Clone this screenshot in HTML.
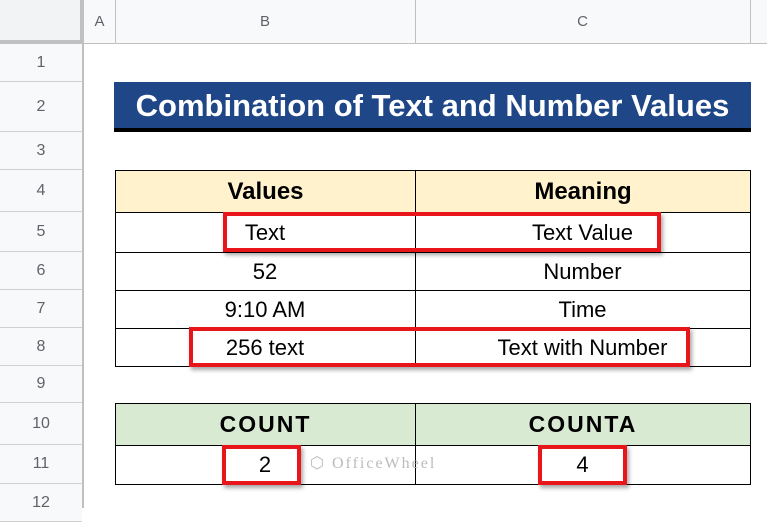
<!DOCTYPE html>
<html><head><style>
body{margin:0;width:767px;height:508px;overflow:hidden;background:#fff;font-family:"Liberation Sans",Arial,sans-serif;position:relative}
.a{position:absolute;box-sizing:border-box}
.hd{color:#5f6368;font-size:15px;text-align:center}
.rn{left:0;width:82px;border-bottom:1px solid #d0d0d0;background:#f8f9fa;color:#5f6368;font-size:16px;display:flex;align-items:center;justify-content:center}
.c{display:flex;align-items:center;justify-content:center;font-size:22px;color:#000}
.red{border:4px solid #e8151b;box-shadow:2px 3px 4px rgba(0,0,0,.35)}
</style></head><body>
<div class="a" style="left:0;top:0;width:767px;height:44px;background:#f8f9fa;border-bottom:1px solid #c0c0c0"></div>
<div class="a" style="left:0;top:0;width:84px;height:44px;background:#f1f3f4;border-right:4px solid #c0c0c0;border-bottom:4px solid #c0c0c0"></div>
<div class="a hd" style="left:84px;top:13px;width:31px">A</div>
<div class="a hd" style="left:115px;top:13px;width:300px">B</div>
<div class="a hd" style="left:415px;top:13px;width:335px">C</div>
<div class="a" style="left:115px;top:0;width:1px;height:44px;background:#c0c0c0"></div>
<div class="a" style="left:415px;top:0;width:1px;height:44px;background:#c0c0c0"></div>
<div class="a" style="left:750px;top:0;width:1px;height:44px;background:#c0c0c0"></div>
<div class="a" style="left:82px;top:44px;width:2px;height:464px;background:#c0c0c0"></div>
<div class="a rn" style="top:44px;height:38px">1</div>
<div class="a rn" style="top:82px;height:50px">2</div>
<div class="a rn" style="top:132px;height:38px">3</div>
<div class="a rn" style="top:170px;height:42px">4</div>
<div class="a rn" style="top:212px;height:40px">5</div>
<div class="a rn" style="top:252px;height:38px">6</div>
<div class="a rn" style="top:290px;height:38px">7</div>
<div class="a rn" style="top:328px;height:38px">8</div>
<div class="a rn" style="top:366px;height:37px">9</div>
<div class="a rn" style="top:403px;height:42px">10</div>
<div class="a rn" style="top:445px;height:39px">11</div>
<div class="a rn" style="top:484px;height:38px">12</div>

<div class="a c" style="left:114px;top:82px;width:637px;height:50px;background:#1f4788;border-bottom:4px solid #000;color:#fff;font-weight:bold;font-size:31px;padding-top:2px">Combination of Text and Number Values</div>

<div class="a" style="left:115px;top:170px;width:636px;height:197px;border:1px solid #000"></div>
<div class="a c" style="left:116px;top:171px;width:299px;height:41px;background:#fff2cc;font-weight:bold;font-size:24px">Values</div>
<div class="a c" style="left:416px;top:171px;width:334px;height:41px;background:#fff2cc;font-weight:bold;font-size:24px">Meaning</div>
<div class="a" style="left:415px;top:170px;width:1px;height:197px;background:#000"></div>
<div class="a" style="left:115px;top:212px;width:636px;height:1px;background:#000"></div>
<div class="a" style="left:115px;top:252px;width:636px;height:1px;background:#000"></div>
<div class="a" style="left:115px;top:290px;width:636px;height:1px;background:#000"></div>
<div class="a" style="left:115px;top:328px;width:636px;height:1px;background:#000"></div>
<div class="a c" style="left:115px;top:213px;width:300px;height:39px">Text</div>
<div class="a c" style="left:415px;top:213px;width:335px;height:39px">Text Value</div>
<div class="a c" style="left:115px;top:253px;width:300px;height:37px">52</div>
<div class="a c" style="left:415px;top:253px;width:335px;height:37px">Number</div>
<div class="a c" style="left:115px;top:291px;width:300px;height:37px">9:10 AM</div>
<div class="a c" style="left:415px;top:291px;width:335px;height:37px">Time</div>
<div class="a c" style="left:115px;top:329px;width:300px;height:37px">256 text</div>
<div class="a c" style="left:415px;top:329px;width:335px;height:37px">Text with Number</div>

<div class="a" style="left:115px;top:403px;width:636px;height:82px;border:1px solid #000"></div>
<div class="a c" style="left:116px;top:404px;width:299px;height:41px;background:#d9ead3;font-weight:bold;font-size:23px;letter-spacing:2px">COUNT</div>
<div class="a c" style="left:416px;top:404px;width:334px;height:41px;background:#d9ead3;font-weight:bold;font-size:23px;letter-spacing:2px">COUNTA</div>
<div class="a" style="left:415px;top:403px;width:1px;height:82px;background:#000"></div>
<div class="a" style="left:115px;top:445px;width:636px;height:1px;background:#000"></div>
<div class="a" style="left:310px;top:453px;color:#bbb;font-family:'Liberation Serif',serif;font-size:16px;letter-spacing:2px">⬡ OfficeWheel</div>
<div class="a c" style="left:115px;top:446px;width:300px;height:38px">2</div>
<div class="a c" style="left:415px;top:446px;width:335px;height:38px">4</div>

<div class="a red" style="left:223px;top:212px;width:438px;height:40px"></div>
<div class="a red" style="left:189px;top:327px;width:501px;height:40px"></div>
<div class="a red" style="left:222px;top:445px;width:79px;height:40px"></div>
<div class="a red" style="left:538px;top:445px;width:89px;height:40px"></div>
</body></html>
